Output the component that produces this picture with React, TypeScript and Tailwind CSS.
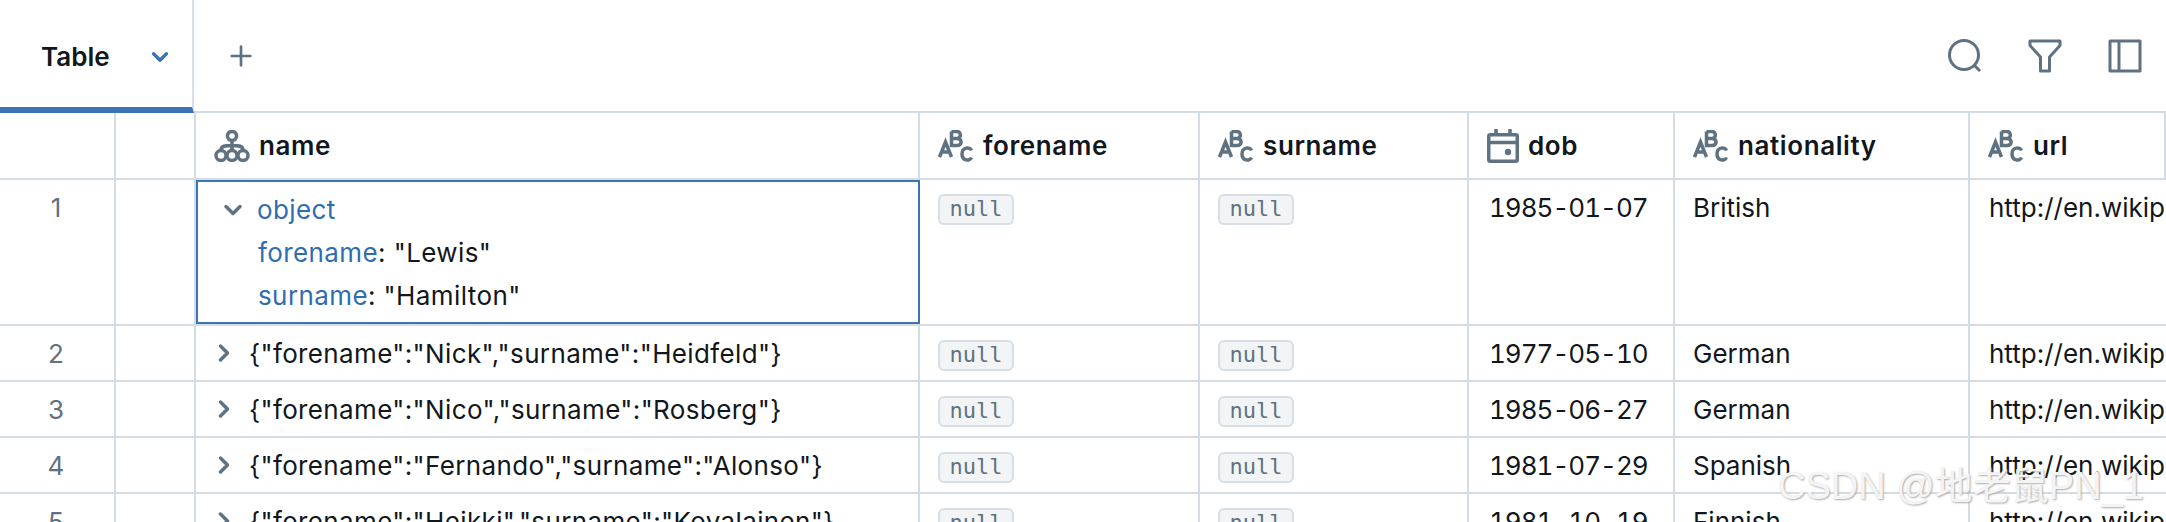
import { ChevronDown, ChevronRight, Plus } from "lucide-react"

const COLS = "grid grid-cols-[116px_80px_724px_280px_269px_206px_295px_1fr]"
const CELL = "border-r-2 border-[#d3dbe5] overflow-hidden whitespace-nowrap"

const rows = [
  { n: 2, name: '{"forename":"Nick","surname":"Heidfeld"}', dob: "1977-05-10", nat: "German", url: "Nick_Heidfeld" },
  { n: 3, name: '{"forename":"Nico","surname":"Rosberg"}', dob: "1985-06-27", nat: "German", url: "Nico_Rosberg" },
  { n: 4, name: '{"forename":"Fernando","surname":"Alonso"}', dob: "1981-07-29", nat: "Spanish", url: "Fernando_Alonso" },
  { n: 5, name: '{"forename":"Heikki","surname":"Kovalainen"}', dob: "1981-10-19", nat: "Finnish", url: "Heikki_Kovalainen" },
]

function AbcIcon() {
  return (
    <svg width="36" height="32" viewBox="0 0 36 32" className="shrink-0 text-[#5f7281]" fill="none" stroke="currentColor" strokeWidth="3.5">
      <path d="M1.5 27 L7.5 12 L13.5 27 M4 22 H11" />
      <path d="M13.5 1.5 H19 C23.5 1.5 23.5 8.5 19 8.5 H13.5 M19 8.5 C24.5 8.5 24.5 15.5 19 15.5 H13.5 V1.5" />
      <path d="M33.5 20.5 C32 16.5 24 17 24 24 C24 31 32 31.5 33.5 27.5" />
    </svg>
  )
}

function StructIcon() {
  return (
    <svg width="36" height="32" viewBox="0 0 36 32" className="shrink-0 text-[#5f7281]" fill="none" stroke="currentColor" strokeWidth="3.5">
      <circle cx="18" cy="6" r="4.5" />
      <circle cx="7" cy="25.5" r="5" />
      <circle cx="18" cy="25.5" r="5" />
      <circle cx="29" cy="25.5" r="5" />
      <path d="M18 10.5 V20 M7 20 C7 16 11 15.5 18 15.5 C25 15.5 29 16 29 20" />
    </svg>
  )
}

function CalendarIcon() {
  return (
    <svg width="32" height="34" viewBox="0 0 32 34" className="shrink-0 text-[#5f7281]" fill="none" stroke="currentColor" strokeWidth="3.5">
      <rect x="1.75" y="5.75" width="28.5" height="26.5" rx="1.5" />
      <path d="M1.5 13.5 H30.5 M9 0 V6 M23 0 V6" />
      <circle cx="21" cy="23" r="3.2" fill="currentColor" stroke="none" />
    </svg>
  )
}

function NullBadge() {
  return (
    <span className="inline-flex items-center justify-center w-[76px] h-[31px] rounded-md border-2 border-[#d8dee5] bg-[#f2f4f6] text-[#5f7281] text-[22px] leading-none font-['DejaVu_Sans_Mono',monospace]">
      null
    </span>
  )
}

function HeaderCell({ icon, label }: { icon: React.ReactNode; label: string }) {
  return (
    <div className={`${CELL} flex items-center gap-[9px] pl-[18px] font-semibold tracking-[0.6px]`}>
      {icon}
      {label}
    </div>
  )
}

export default function App() {
  return (
    <div className="relative w-[2166px] h-[522px] overflow-hidden bg-white text-[#11171c] text-[26px] font-['Inter',sans-serif]">
      <div className="flex h-[113px]">
        <div className="flex items-center w-[194px] h-full border-r-2 border-r-[#d8dfe8] border-b-[6px] border-b-[#3b73b5] pl-[41px] pt-[6px] font-semibold">
          Table
          <ChevronDown className="ml-[37px] text-[#3b73b5]" size={26} strokeWidth={3} />
        </div>
        <div className="flex flex-1 items-center border-b-2 border-[#d3dbe5] pl-[31px] pr-[23px] text-[#5f7281]">
          <Plus size={32} strokeWidth={2} />
          <div className="ml-auto flex items-center gap-[44px]">
            <svg width="36" height="36" viewBox="0 0 36 36" fill="none" stroke="currentColor" strokeWidth="3">
              <circle cx="17" cy="17" r="14.5" />
              <path d="M27 27 L33 33" />
            </svg>
            <svg width="36" height="36" viewBox="0 0 36 36" fill="none" stroke="currentColor" strokeWidth="3" strokeLinejoin="round">
              <path d="M3 3 H33 V7.5 L22.5 19 V33 H13.5 V19 L3 7.5 Z" />
            </svg>
            <svg width="36" height="36" viewBox="0 0 36 36" fill="none" stroke="currentColor" strokeWidth="3" strokeLinejoin="round">
              <path d="M3 3 H33 V33 H3 Z M12 3 V33" />
            </svg>
          </div>
        </div>
      </div>

      <div className={`${COLS} h-[67px] border-b-2 border-[#d3dbe5]`}>
        <div className={CELL} />
        <div className={CELL} />
        <HeaderCell icon={<StructIcon />} label="name" />
        <HeaderCell icon={<AbcIcon />} label="forename" />
        <HeaderCell icon={<AbcIcon />} label="surname" />
        <HeaderCell icon={<CalendarIcon />} label="dob" />
        <HeaderCell icon={<AbcIcon />} label="nationality" />
        <HeaderCell icon={<AbcIcon />} label="url" />
      </div>

      <div className={`${COLS} h-[146px] border-b-2 border-[#d3dbe5]`}>
        <div className={`${CELL} text-center pt-[8px] pr-[2px] text-[#5f7281]`}>1</div>
        <div className={CELL} />
        <div className="border-2 border-[#3b73b5] pl-[21px] pt-[6px] leading-[43px] tracking-[0.4px]">
          <div className="flex items-center text-[#2f6db3]">
            <ChevronDown className="mr-[10px] text-[#5f7281]" size={28} strokeWidth={3} />
            object
          </div>
          <div className="pl-[39px]">
            <span className="text-[#2f6db3]">forename</span>: "Lewis"
          </div>
          <div className="pl-[39px]">
            <span className="text-[#2f6db3]">surname</span>: "Hamilton"
          </div>
        </div>
        <div className={`${CELL} pl-[18px] pt-[7px]`}><NullBadge /></div>
        <div className={`${CELL} pl-[18px] pt-[7px]`}><NullBadge /></div>
        <div className={`${CELL} pl-[20px] pt-[8px] tabular-nums tracking-[-1px]`}>1985-01-07</div>
        <div className={`${CELL} pl-[18px] pt-[8px]`}>British</div>
        <div className="overflow-hidden whitespace-nowrap pl-[19px] pt-[8px]">http://en.wikipedia.org/wiki/Lewis_Hamilton</div>
      </div>

      {rows.map((row) => (
        <div key={row.n} className={`${COLS} h-[56px] border-b-2 border-[#d3dbe5] items-stretch`}>
          <div className={`${CELL} text-center pt-[8px] pr-[2px] text-[#5f7281]`}>{row.n}</div>
          <div className={CELL} />
          <div className={`${CELL} flex items-center pl-[14px] tracking-[0.36px]`}>
            <ChevronRight className="mr-[11px] text-[#5f7281]" size={28} strokeWidth={3} />
            {row.name}
          </div>
          <div className={`${CELL} pl-[18px] pt-[7px]`}><NullBadge /></div>
          <div className={`${CELL} pl-[18px] pt-[7px]`}><NullBadge /></div>
          <div className={`${CELL} pl-[20px] pt-[8px] tabular-nums tracking-[-1px]`}>{row.dob}</div>
          <div className={`${CELL} pl-[18px] pt-[8px]`}>{row.nat}</div>
          <div className="overflow-hidden whitespace-nowrap pl-[19px] pt-[8px]">{`http://en.wikipedia.org/wiki/${row.url}`}</div>
        </div>
      ))}

      <div className="absolute left-[1778px] top-[458px] whitespace-nowrap text-[38px] text-[#f4f4f4] [text-shadow:1px_1px_2px_#aaaaaa] font-['Liberation_Sans','Noto_Sans_CJK_SC',sans-serif]">
        CSDN @地老鼠PN_1
      </div>
    </div>
  )
}
